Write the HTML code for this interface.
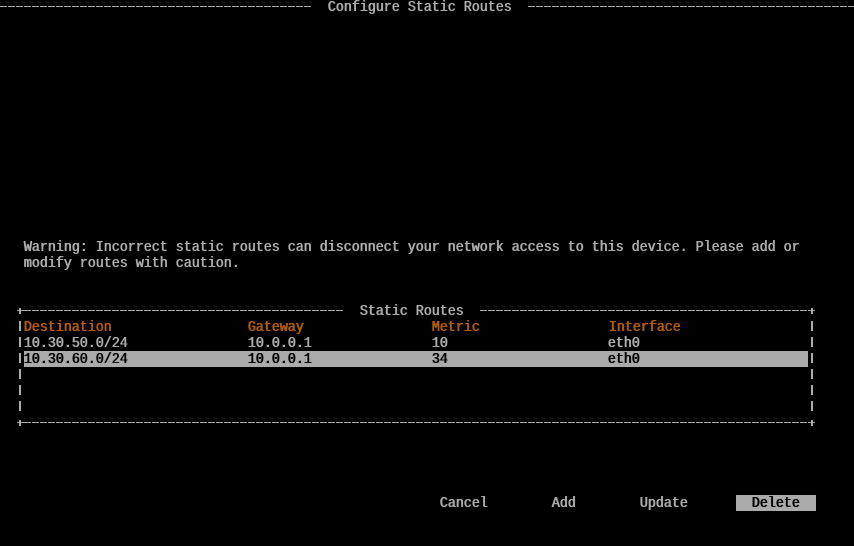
<!DOCTYPE html>
<html>
<head>
<meta charset="utf-8">
<style>
html,body{margin:0;padding:0;background:#000;width:854px;height:546px;overflow:hidden}
#s{position:relative;width:854px;height:546px;background:#000;overflow:hidden}
.t{position:absolute;font:normal 13.334px/16px "Liberation Mono",monospace;color:#aaa;white-space:pre;height:16px;margin:0;transform:translate(-.5px,1px) scaleY(1.12);transform-origin:0 70%;text-shadow:.7px 0 0 currentColor}
.o{color:#b35c07}
.k{color:#000}
.d{position:absolute;height:1px;background:repeating-linear-gradient(90deg,#aaa 0,#aaa 7px,transparent 7px,transparent 8px)}
.b{position:absolute;background:#aaa}
.v{position:absolute;width:2px;height:10px;background:#aaa}
</style>
</head>
<body>
<div id="s">
<div class="d" style="left:0;top:6px;width:312px"></div>
<div class="t" style="left:328px;top:0px">Configure Static Routes</div>
<div class="d" style="left:528px;top:6px;width:326px"></div>

<div class="t" style="left:24px;top:240px">Warning: Incorrect static routes can disconnect your network access to this device. Please add or</div>
<div class="t" style="left:24px;top:256px">modify routes with caution.</div>

<div class="b" style="left:17px;top:310px;width:7px;height:1px"></div>
<div class="b" style="left:19px;top:308px;width:2px;height:6px"></div>
<div class="d" style="left:24px;top:310px;width:320px"></div>
<div class="t" style="left:360px;top:304px">Static Routes</div>
<div class="d" style="left:480px;top:310px;width:328px"></div>
<div class="b" style="left:808px;top:310px;width:7px;height:1px"></div>
<div class="b" style="left:811px;top:308px;width:2px;height:6px"></div>

<div class="b" style="left:17px;top:422px;width:7px;height:1px"></div>
<div class="b" style="left:19px;top:420px;width:2px;height:6px"></div>
<div class="d" style="left:24px;top:422px;width:784px"></div>
<div class="b" style="left:808px;top:422px;width:7px;height:1px"></div>
<div class="b" style="left:811px;top:420px;width:2px;height:6px"></div>

<div class="v" style="left:19px;top:321px"></div>
<div class="v" style="left:19px;top:337px"></div>
<div class="v" style="left:19px;top:353px"></div>
<div class="v" style="left:19px;top:369px"></div>
<div class="v" style="left:19px;top:385px"></div>
<div class="v" style="left:19px;top:401px"></div>
<div class="v" style="left:811px;top:321px"></div>
<div class="v" style="left:811px;top:337px"></div>
<div class="v" style="left:811px;top:353px"></div>
<div class="v" style="left:811px;top:369px"></div>
<div class="v" style="left:811px;top:385px"></div>
<div class="v" style="left:811px;top:401px"></div>

<div class="t o" style="left:24px;top:320px">Destination</div>
<div class="t o" style="left:248px;top:320px">Gateway</div>
<div class="t o" style="left:432px;top:320px">Metric</div>
<div class="t o" style="left:609px;top:320px">Interface</div>

<div class="t" style="left:24px;top:336px">10.30.50.0/24</div>
<div class="t" style="left:248px;top:336px">10.0.0.1</div>
<div class="t" style="left:432px;top:336px">10</div>
<div class="t" style="left:608px;top:336px">eth0</div>

<div class="b" style="left:24px;top:351px;width:784px;height:16px"></div>
<div class="t k" style="left:24px;top:352px">10.30.60.0/24</div>
<div class="t k" style="left:248px;top:352px">10.0.0.1</div>
<div class="t k" style="left:432px;top:352px">34</div>
<div class="t k" style="left:608px;top:352px">eth0</div>

<div class="t" style="left:440px;top:496px">Cancel</div>
<div class="t" style="left:552px;top:496px">Add</div>
<div class="t" style="left:640px;top:496px">Update</div>
<div class="b" style="left:736px;top:495px;width:80px;height:16px"></div>
<div class="t k" style="left:752px;top:496px">Delete</div>
</div>
</body>
</html>
